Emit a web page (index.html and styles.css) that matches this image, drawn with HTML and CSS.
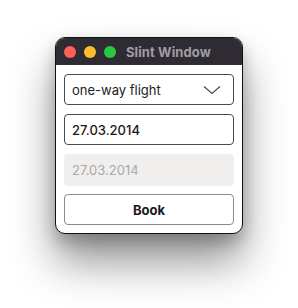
FILE: index.html
```html
<!DOCTYPE html>
<html lang="en">
<head>
  <meta charset="UTF-8">
  <title>Slint Window</title>
  <link rel="stylesheet" href="styles.css">
</head>
<body>
  <div class="window">
    <div class="titlebar">
      <span class="light red"></span>
      <span class="light yellow"></span>
      <span class="light green"></span>
      <span class="title">Slint Window</span>
    </div>
    <div class="content">
      <div class="combo">
        <span>one-way flight</span>
        <svg class="chevron" width="18" height="10" viewBox="0 0 18 10">
          <path d="M1 1.5 L9 8.5 L17 1.5" fill="none" stroke="#4a4a4a" stroke-width="1.2"/>
        </svg>
      </div>
      <div class="field">27.03.2014</div>
      <div class="field disabled">27.03.2014</div>
      <button class="book">Book</button>
    </div>
  </div>
</body>
</html>
```

FILE: styles.css
```css
html, body { height: 100%; }
body { margin: 0; padding-top: 37px; box-sizing: border-box; min-height: 308px; background: #fff; font-family: Inter, "Noto Sans", sans-serif; font-size: 13px; }
.window { width: 186px; margin: 0 auto; border: 1px solid #111; border-radius: 10px; background: #fff; overflow: hidden; box-shadow: 0 28px 44px rgba(0,0,0,0.42), 0 8px 16px rgba(0,0,0,0.22); }
.titlebar { height: 27px; background: #2f2b33; display: flex; align-items: center; padding-left: 8px; }
.light { width: 12px; height: 12px; border-radius: 50%; margin-right: 8px; }
.red { background: #fe5f57; }
.yellow { background: #febc2e; }
.green { background: #28c840; }
.title { margin-left: 2px; color: #a19da5; font-weight: 700; font-size: 13px; letter-spacing: 0.1px; }
.content { padding: 9px 8px 8px; display: flex; flex-direction: column; gap: 9px; }
.combo, .field, .book { height: 31px; box-sizing: border-box; border: 1px solid #4a4a4a; border-radius: 4px; display: flex; align-items: center; padding: 0 7px; color: #222; }
.combo { justify-content: space-between; padding-right: 12px; }
.field { font-weight: 500; color: #1a1a1a; }
.field.disabled { border-color: transparent; background: #f0efee; color: #a9a9a9; font-weight: 400; height: 32px; }
.book { justify-content: center; background: #fff; border-color: #8a8a8a; font-family: inherit; font-size: 13px; font-weight: 700; color: #1a1a1a; margin-top: -1px; }
```
